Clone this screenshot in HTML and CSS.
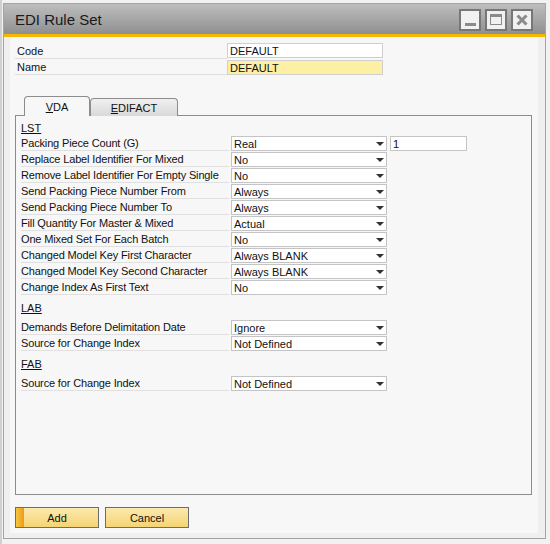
FILE: index.html
```html
<!DOCTYPE html>
<html lang="en">
<head>
  <meta charset="UTF-8" />
  <title>EDI Rule Set</title>
  <link rel="stylesheet" href="styles.css">
</head>
<body>
  <div class="screen">
    <div class="window">
      <div class="titlebar">
        <span class="title">EDI Rule Set</span>
        <div class="controls">
          <span class="ctl"><span class="ico-min"></span></span>
          <span class="ctl"><span class="ico-max"></span></span>
          <span class="ctl">
            <svg width="12" height="12" viewBox="0 0 12 12">
              <path d="M1.5 1.5 L10.5 10.5 M10.5 1.5 L1.5 10.5" stroke="#8a8a8a" stroke-width="3" />
            </svg>
          </span>
        </div>
      </div>

      <div class="body">
        <div class="head-row">
          <span class="head-label">Code</span>
          <span class="field">DEFAULT</span>
        </div>
        <div class="head-row">
          <span class="head-label">Name</span>
          <span class="field field-yellow">DEFAULT</span>
        </div>

        <div class="tabs">
          <span class="tab active"><u>V</u>DA</span>
          <span class="tab"><u>E</u>DIFACT</span>
        </div>

        <div class="panel">
          <div class="sec first">LST</div>
          <div class="row">
            <span class="lbl">Packing Piece Count (G)</span>
            <span class="combo">Real<span class="arrow"></span></span>
            <span class="edit">1</span>
          </div>
          <div class="row">
            <span class="lbl">Replace Label Identifier For Mixed</span>
            <span class="combo">No<span class="arrow"></span></span>
          </div>
          <div class="row">
            <span class="lbl">Remove Label Identifier For Empty Single</span>
            <span class="combo">No<span class="arrow"></span></span>
          </div>
          <div class="row">
            <span class="lbl">Send Packing Piece Number From</span>
            <span class="combo">Always<span class="arrow"></span></span>
          </div>
          <div class="row">
            <span class="lbl">Send Packing Piece Number To</span>
            <span class="combo">Always<span class="arrow"></span></span>
          </div>
          <div class="row">
            <span class="lbl">Fill Quantity For Master &amp; Mixed</span>
            <span class="combo">Actual<span class="arrow"></span></span>
          </div>
          <div class="row">
            <span class="lbl">One Mixed Set For Each Batch</span>
            <span class="combo">No<span class="arrow"></span></span>
          </div>
          <div class="row">
            <span class="lbl">Changed Model Key First Character</span>
            <span class="combo">Always BLANK<span class="arrow"></span></span>
          </div>
          <div class="row">
            <span class="lbl">Changed Model Key Second Character</span>
            <span class="combo">Always BLANK<span class="arrow"></span></span>
          </div>
          <div class="row">
            <span class="lbl">Change Index As First Text</span>
            <span class="combo">No<span class="arrow"></span></span>
          </div>

          <div class="sec">LAB</div>
          <div class="row">
            <span class="lbl">Demands Before Delimitation Date</span>
            <span class="combo">Ignore<span class="arrow"></span></span>
          </div>
          <div class="row">
            <span class="lbl">Source for Change Index</span>
            <span class="combo">Not Defined<span class="arrow"></span></span>
          </div>

          <div class="sec">FAB</div>
          <div class="row">
            <span class="lbl">Source for Change Index</span>
            <span class="combo">Not Defined<span class="arrow"></span></span>
          </div>
        </div>

        <div class="actions">
          <button class="btn btn-main">Add</button>
          <button class="btn">Cancel</button>
        </div>
      </div>
    </div>
  </div>
</body>
</html>
```

FILE: styles.css
```css
html, body {
  margin: 0;
  padding: 0;
  background-color: #f2f2f2;
  font-family: "Liberation Sans", Arial, sans-serif;
  font-size: 11px;
  color: #111;
}
.screen {
  width: 550px;
  height: 544px;
  box-sizing: border-box;
  padding: 3px 4px 5px 1px;
  border-left: 2px solid #d0d0d0;
}
.window {
  width: 543px;
  height: 536px;
  box-sizing: border-box;
  border: 1px solid #a4a4a4;
  display: flex;
  flex-direction: column;
}
.titlebar {
  height: 33px;
  box-sizing: border-box;
  border-bottom: 3px solid #f6b700;
  background: linear-gradient(#bebebe, #8f8f8f);
  display: flex;
  align-items: center;
  justify-content: space-between;
  padding: 0 12px 0 11px;
}
.title {
  font-size: 15px;
  color: #1a1a1a;
  margin-top: 1px;
}
.controls {
  display: flex;
  gap: 4px;
  margin-top: 1px;
}
.ctl {
  width: 22px;
  height: 22px;
  box-sizing: border-box;
  border: 2px solid #777;
  background-color: #f1f1f1;
  display: flex;
  align-items: center;
  justify-content: center;
}
.ico-min {
  width: 11px;
  height: 3px;
  background-color: #8a8a8a;
  margin-top: 9px;
}
.ico-max {
  width: 12px;
  height: 11px;
  box-sizing: border-box;
  border: 1.5px solid #8a8a8a;
  border-top-width: 3px;
}

.body {
  flex: 1;
  box-sizing: border-box;
  background-color: #f7f7f7;
  border-style: solid;
  border-color: #efefef;
  border-width: 0 7px 5px 6px;
  padding: 6px 0 0 5px;
}
.head-row {
  display: flex;
  height: 16px;
}
.head-label {
  width: 212px;
  height: 16px;
  box-sizing: border-box;
  padding-left: 2px;
  line-height: 17px;
  border-bottom: 1px solid #dedede;
}
.field {
  width: 156px;
  height: 15px;
  box-sizing: border-box;
  border: 1px solid #cfcfcf;
  background-color: #fff;
  padding: 1px 0 0 2px;
  line-height: 13px;
}
.field-yellow {
  background-color: #fdefa3;
  margin-top: 1px;
}

.tabs {
  display: flex;
  align-items: flex-end;
  height: 20px;
  margin: 21px 0 -1px 9px;
}
.tab {
  width: 88px;
  height: 18px;
  box-sizing: border-box;
  border: 1px solid #8c8c8c;
  border-bottom: none;
  border-radius: 4px 4px 0 0;
  background: linear-gradient(#f0f0f0, #d9d9d9);
  text-align: center;
  line-height: 19px;
}
.tab.active {
  width: 66px;
  height: 20px;
  background: #f7f7f7;
  line-height: 20px;
  position: relative;
  z-index: 1;
}

.panel {
  width: 517px;
  height: 380px;
  box-sizing: border-box;
  border: 1px solid #8c8c8c;
  padding: 3px 0 0 5px;
}
.sec {
  height: 16px;
  line-height: 18px;
  text-decoration: underline;
  margin: 4px 0;
}
.sec.first {
  margin: 0;
}
.row {
  display: flex;
  height: 16px;
}
.lbl {
  width: 208px;
  height: 16px;
  box-sizing: border-box;
  border-bottom: 1px solid #e0e0e0;
  line-height: 17px;
  letter-spacing: -0.15px;
  white-space: nowrap;
}
.combo, .edit {
  height: 15px;
  margin-top: 1px;
  box-sizing: border-box;
  border: 1px solid #c4c4c4;
  background-color: #fff;
  padding: 1px 0 0 2px;
  line-height: 12px;
}
.combo {
  width: 156px;
  margin-left: 2px;
  display: flex;
  justify-content: space-between;
  align-items: center;
  padding-right: 2px;
}
.edit {
  width: 77px;
  margin-left: 3px;
}
.arrow {
  width: 0;
  height: 0;
  margin-top: -1px;
  border-left: 4px solid transparent;
  border-right: 4px solid transparent;
  border-top: 4px solid #333;
}

.actions {
  display: flex;
  gap: 6px;
  margin-top: 12px;
}
.btn {
  width: 84px;
  height: 21px;
  box-sizing: border-box;
  border: 1px solid #6c6c6c;
  background: linear-gradient(#fbe9b0, #f5d472);
  font-family: inherit;
  font-size: 11px;
  color: #111;
  padding: 0;
}
.btn-main {
  background: linear-gradient(to right, #f7c63c 0, #ee9a1c 8px, transparent 8px),
              linear-gradient(#fbe9b0, #f5d472);
}
```
